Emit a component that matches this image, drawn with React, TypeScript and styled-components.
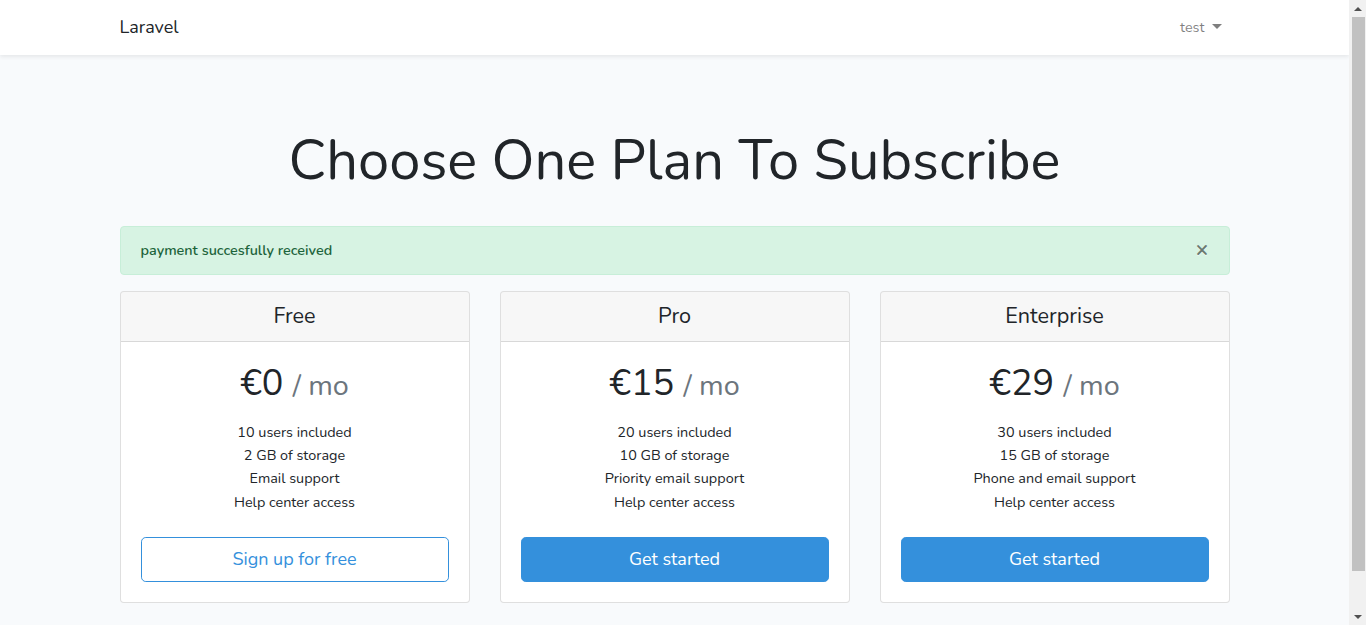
import React from "react";
import styled, { createGlobalStyle } from "styled-components";

const GlobalStyle = createGlobalStyle`
  *, *::before, *::after { box-sizing: border-box; }
  html, body { height: 100%; overflow: hidden; }
  body {
    margin: 0;
    background: #f8fafc;
    color: #212529;
    font-family: "Nunito", "Lato", "Liberation Sans", sans-serif;
    font-size: 14.4px;
    line-height: 1.6;
  }
`;

const Viewport = styled.div`
  display: flex;
  height: 625px;
`;

const Page = styled.div`
  flex: 1 1 auto;
  min-width: 0;
  height: 100%;
  overflow: hidden;
`;

const Scrollbar = styled.div`
  flex: 0 0 17px;
  display: flex;
  flex-direction: column;
  align-items: center;
  background: #f1f1f1;
`;

const ScrollArrow = styled.div<{ $down?: boolean }>`
  flex: 0 0 17px;
  width: 17px;
  display: flex;
  align-items: center;
  justify-content: center;
  &::before {
    content: "";
    border-left: 4px solid transparent;
    border-right: 4px solid transparent;
    ${(p) => (p.$down ? "border-top: 4px solid #505050;" : "border-bottom: 4px solid #505050;")}
  }
`;

const ScrollThumb = styled.div`
  width: 13px;
  height: 554px;
  margin-left: 1px;
  background: #c1c1c1;
`;

const ScrollSpace = styled.div`
  flex: 1 1 auto;
`;

const Navbar = styled.nav`
  position: relative;
  background: #fff;
  box-shadow: 0 2px 4px rgba(0, 0, 0, 0.075);
  padding: 8px 0;
`;

const Container = styled.div`
  width: 1140px;
  max-width: 100%;
  margin: 0 auto;
  padding: 0 15px;
`;

const NavInner = styled(Container)`
  display: flex;
  align-items: center;
  justify-content: space-between;
`;

const Brand = styled.a`
  font-size: 18px;
  line-height: 28.8px;
  padding: 5px 0;
  color: #212529;
  text-decoration: none;
`;

const NavLink = styled.a`
  color: rgba(0, 0, 0, 0.5);
  padding: 8px;
  text-decoration: none;
  display: flex;
  align-items: center;
  &::after {
    content: "";
    display: inline-block;
    margin-left: 7px;
    border-top: 5px solid;
    border-left: 5px solid transparent;
    border-right: 5px solid transparent;
    border-bottom: 0;
    margin-top: -2px;
  }
`;

const Main = styled.main`
  padding: 24px 0;
`;

const Header = styled.div`
  padding: 48px 16px 24px;
  text-align: center;
`;

const Title = styled.h1`
  margin: 0 0 8px;
  font-size: 56px;
  font-weight: 400;
  line-height: 1.2;
`;

const Alert = styled.div`
  position: relative;
  padding: 12px 20px;
  margin-bottom: 16px;
  border: 1px solid #c7eed8;
  border-radius: 4px;
  background: #d7f3e3;
  color: #1d643b;
  font-weight: 600;
`;

const Close = styled.button`
  position: absolute;
  top: 0;
  right: 0;
  padding: 12px 20px;
  background: transparent;
  border: 0;
  font-family: inherit;
  font-size: 21.6px;
  font-weight: 700;
  line-height: 1;
  color: #000;
  opacity: 0.5;
  text-shadow: 0 1px 0 #fff;
  cursor: pointer;
`;

const Deck = styled.div`
  display: flex;
  gap: 30px;
  margin-bottom: 16px;
  text-align: center;
`;

const Card = styled.div`
  flex: 1 0 0;
  display: flex;
  flex-direction: column;
  background: #fff;
  border: 1px solid rgba(0, 0, 0, 0.125);
  border-radius: 4px;
  overflow: hidden;
`;

const CardHeader = styled.div`
  padding: 12px 20px 11px;
  background: rgba(0, 0, 0, 0.03);
  border-bottom: 1px solid rgba(0, 0, 0, 0.125);
`;

const PlanName = styled.h4`
  margin: 0;
  font-size: 21.6px;
  font-weight: 400;
  line-height: 1.2;
`;

const CardBody = styled.div`
  padding: 20px;
  display: flex;
  flex-direction: column;
`;

const Price = styled.h1`
  margin: 0 0 16px;
  font-size: 36px;
  font-weight: 400;
  line-height: 1.2;
`;

const Per = styled.small`
  font-size: 80%;
  color: #6c757d;
`;

const Features = styled.ul`
  list-style: none;
  padding: 0;
  margin: 0 0 23px;
`;

const Button = styled.button<{ $outline?: boolean }>`
  display: block;
  width: 100%;
  padding: 8px 16px;
  font-family: inherit;
  font-size: 18px;
  line-height: 1.5;
  border-radius: 4.8px;
  border: 1px solid #3490dc;
  background: ${(p) => (p.$outline ? "transparent" : "#3490dc")};
  color: ${(p) => (p.$outline ? "#3490dc" : "#fff")};
  cursor: pointer;
`;

const plans = [
  {
    name: "Free",
    price: "€0",
    features: ["10 users included", "2 GB of storage", "Email support", "Help center access"],
    cta: "Sign up for free",
    outline: true,
  },
  {
    name: "Pro",
    price: "€15",
    features: ["20 users included", "10 GB of storage", "Priority email support", "Help center access"],
    cta: "Get started",
    outline: false,
  },
  {
    name: "Enterprise",
    price: "€29",
    features: ["30 users included", "15 GB of storage", "Phone and email support", "Help center access"],
    cta: "Get started",
    outline: false,
  },
];

export default function App() {
  return (
    <>
      <GlobalStyle />
      <Viewport>
        <Page>
          <Navbar>
            <NavInner>
              <Brand href="#">Laravel</Brand>
              <NavLink href="#">test</NavLink>
            </NavInner>
          </Navbar>
          <Main>
            <Header>
              <Title>Choose One Plan To Subscribe</Title>
            </Header>
            <Container>
              <Alert>
                payment succesfully received
                <Close aria-label="Close">×</Close>
              </Alert>
              <Deck>
                {plans.map((p) => (
                  <Card key={p.name}>
                    <CardHeader>
                      <PlanName>{p.name}</PlanName>
                    </CardHeader>
                    <CardBody>
                      <Price>
                        {p.price} <Per>/ mo</Per>
                      </Price>
                      <Features>
                        {p.features.map((f) => (
                          <li key={f}>{f}</li>
                        ))}
                      </Features>
                      <Button $outline={p.outline}>{p.cta}</Button>
                    </CardBody>
                  </Card>
                ))}
              </Deck>
            </Container>
          </Main>
        </Page>
        <Scrollbar aria-hidden="true">
          <ScrollArrow />
          <ScrollThumb />
          <ScrollSpace />
          <ScrollArrow $down />
        </Scrollbar>
      </Viewport>
    </>
  );
}
